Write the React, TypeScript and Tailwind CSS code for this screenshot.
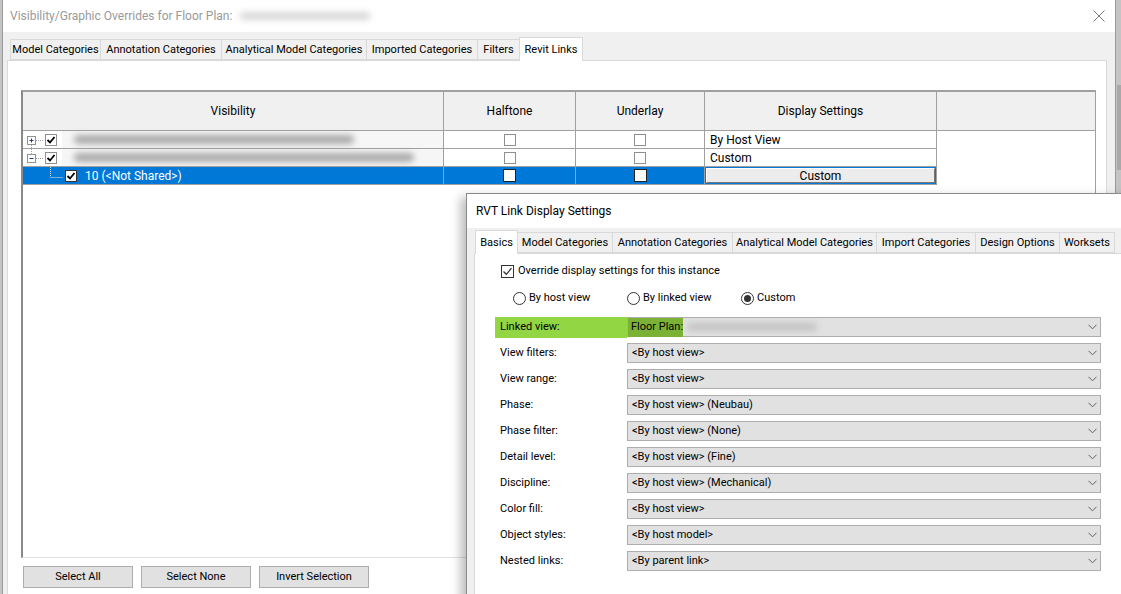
import React from "react";

const GRID = "border-[#a0a0a0]";

function Check({ checked, dark }: { checked?: boolean; dark?: boolean }) {
  return (
    <span
      className={`flex h-[12px] w-[12px] shrink-0 items-center justify-center border bg-white ${
        dark ? "border-[#333333]" : "border-[#8f8f8f]"
      }`}
    >
      {checked && (
        <svg width="10" height="10" viewBox="0 0 10 10">
          <path d="M1.5 5 L4 7.5 L8.5 2" fill="none" stroke="#000" strokeWidth="1.8" />
        </svg>
      )}
    </span>
  );
}

function Tab({ label, w, active, first }: { label: string; w: number; active?: boolean; first?: boolean }) {
  if (active) {
    return (
      <div
        className="relative z-10 -mb-px -ml-px flex h-[24px] items-center justify-center self-end whitespace-nowrap border border-b-0 border-[#d9d9d9] bg-white pt-px"
        style={{ width: w }}
      >
        {label}
      </div>
    );
  }
  return (
    <div
      className={`flex h-[21px] items-center justify-center self-end whitespace-nowrap border border-[#d9d9d9] bg-[#f0f0f0] pt-px ${
        first ? "" : "-ml-px"
      }`}
      style={{ width: w }}
    >
      {label}
    </div>
  );
}

function TreeBox({ minus }: { minus?: boolean }) {
  return (
    <svg width="22" height="17" viewBox="0 0 22 17" className="shrink-0">
      <rect x="4.5" y="5.5" width="8" height="8" fill="#fff" stroke="#919191" />
      <line x1="6.5" y1="9.5" x2="10.5" y2="9.5" stroke="#1c3e8c" />
      {!minus && <line x1="8.5" y1="7.5" x2="8.5" y2="11.5" stroke="#1c3e8c" />}
      <line x1="13" y1="9.5" x2="21" y2="9.5" stroke="#a0a0a0" strokeDasharray="1 1" />
      {minus ? (
        <line x1="8.5" y1="0" x2="8.5" y2="5" stroke="#a0a0a0" strokeDasharray="1 1" />
      ) : (
        <line x1="8.5" y1="14" x2="8.5" y2="17" stroke="#a0a0a0" strokeDasharray="1 1" />
      )}
    </svg>
  );
}

function Blur({ w }: { w: number }) {
  return (
    <div className="ml-[5px] flex h-full flex-1 items-center bg-[#f6f6f6] pl-[12px]">
      <div className="h-[9px] rounded-full bg-[#a9a9a9] blur-[3px]" style={{ width: w }} />
    </div>
  );
}

function GridRow({
  kind,
  display,
}: {
  kind: "plus" | "minus" | "child";
  display: string;
}) {
  const sel = kind === "child";
  return (
    <div className="flex h-[18px]">
      <div
        className={`flex w-[421px] items-center border-r border-b ${GRID} ${sel ? "bg-[#0078d7] text-white" : "bg-white"}`}
      >
        {kind === "child" ? (
          <>
            <svg width="42" height="17" viewBox="0 0 42 17" className="shrink-0">
              <line x1="27.5" y1="0" x2="27.5" y2="10" stroke="#e6e6e6" strokeDasharray="1 1" />
              <line x1="27.5" y1="10.5" x2="40" y2="10.5" stroke="#e6e6e6" strokeDasharray="1 1" />
            </svg>
            <Check checked dark />
            <span className="ml-[8px]">10 (&lt;Not Shared&gt;)</span>
          </>
        ) : (
          <>
            <TreeBox minus={kind === "minus"} />
            <Check checked />
            <Blur w={kind === "plus" ? 280 : 340} />
          </>
        )}
      </div>
      <div className={`flex w-[132px] items-center justify-center border-r border-b ${GRID} ${sel ? "bg-[#0078d7]" : "bg-white"}`}>
        {sel ? <span className="h-[13px] w-[13px] border border-[#222] bg-white" /> : <Check />}
      </div>
      <div className={`flex w-[129px] items-center justify-center border-r border-b ${GRID} ${sel ? "bg-[#0078d7]" : "bg-white"}`}>
        {sel ? <span className="h-[13px] w-[13px] border border-[#222] bg-white" /> : <Check />}
      </div>
      <div className={`flex w-[232px] items-center border-r border-b ${GRID} ${sel ? "bg-[#0078d7] p-px" : "bg-white pl-[5px]"}`}>
        {sel ? (
          <div className="flex h-full w-full items-center justify-center border border-t-white border-l-white border-r-[#777] border-b-[#777] bg-[#ececec]">
            {display}
          </div>
        ) : (
          display
        )}
      </div>
      <div className="flex-1 bg-white" />
    </div>
  );
}

function Chevron() {
  return (
    <svg width="9" height="6" viewBox="0 0 9 6" className="shrink-0">
      <path d="M0.5 0.8 L4.5 4.8 L8.5 0.8" fill="none" stroke="#606060" strokeWidth="1" />
    </svg>
  );
}

function SettingRow({ label, value, green }: { label: string; value: string; green?: boolean }) {
  return (
    <div className="flex h-[20px] items-center">
      <div
        className={`flex h-[21px] w-[127px] shrink-0 items-center whitespace-nowrap ${green ? "-ml-[5px] w-[132px] bg-[#93d644] pl-[5px]" : ""}`}
      >
        {label}
      </div>
      <div className="flex h-[20px] w-[474px] shrink-0 items-center border border-[#adadad] bg-[#e1e1e1] pr-[3px]">
        {green ? (
          <>
            <span className="flex h-[19px] w-[55px] shrink-0 items-center whitespace-nowrap bg-[#7bb236] pl-[3px]">
              Floor Plan:
            </span>
            <div className="ml-[4px] h-[8px] w-[130px] rounded-full bg-[#c2c2c2] blur-[3px]" />
          </>
        ) : (
          <span className="whitespace-nowrap pl-[4px]">{value}</span>
        )}
        <span className="flex-1" />
        <Chevron />
      </div>
    </div>
  );
}

function Radio({ label, on }: { label: string; on?: boolean }) {
  return (
    <div className="flex w-[114px] items-center gap-[3px]">
      <span className="flex h-[13px] w-[13px] items-center justify-center rounded-full border border-[#333] bg-white">
        {on && <span className="h-[7px] w-[7px] rounded-full bg-[#333]" />}
      </span>
      {label}
    </div>
  );
}

function Button({ label }: { label: string }) {
  return (
    <div className="flex h-[22px] w-[110px] items-center justify-center border border-[#adadad] bg-[#e1e1e1]">
      {label}
    </div>
  );
}

export default function App() {
  const rows: [string, string][] = [
    ["View filters:", "<By host view>"],
    ["View range:", "<By host view>"],
    ["Phase:", "<By host view> (Neubau)"],
    ["Phase filter:", "<By host view> (None)"],
    ["Detail level:", "<By host view> (Fine)"],
    ["Discipline:", "<By host view> (Mechanical)"],
    ["Color fill:", "<By host view>"],
    ["Object styles:", "<By host model>"],
    ["Nested links:", "<By parent link>"],
  ];

  return (
    <div className="relative h-[594px] w-[1121px] overflow-hidden bg-[#c4c4c4] font-['Roboto',sans-serif] text-[11px] text-black">
      {/* Main window */}
      <div className="absolute left-[2px] top-0 flex h-[640px] w-[1114px] flex-col border-x border-[#9a9a9a]">
        <div className="flex h-[32px] items-center bg-white pl-[7px] pr-[10px] text-[12px] text-[#9a9a9a]">
          <span>Visibility/Graphic Overrides for Floor Plan:</span>
          <div className="ml-[8px] h-[8px] w-[130px] rounded-full bg-[#d8d8d8] blur-[3px]" />
          <span className="flex-1" />
          <svg width="12" height="12" viewBox="0 0 12 12">
            <path d="M0.5 0.5 L11.5 11.5 M11.5 0.5 L0.5 11.5" stroke="#777" strokeWidth="1" />
          </svg>
        </div>
        <div className="flex flex-1 flex-col bg-[#f0f0f0] pl-[4px] pr-[8px]">
          <div className="flex h-[28px] pl-[3px]">
            <Tab label="Model Categories" w={91} first />
            <Tab label="Annotation Categories" w={122} />
            <Tab label="Analytical Model Categories" w={146} />
            <Tab label="Imported Categories" w={112} />
            <Tab label="Filters" w={43} />
            <Tab label="Revit Links" w={64} active />
          </div>
          <div className="flex flex-1 flex-col border border-[#d9d9d9] bg-white pl-[13px] pr-[10px] pt-[29px]">
            <div className="flex h-[468px] flex-col border-t-2 border-l-2 border-r border-b border-t-[#a0a0a0] border-l-[#8a8a8a] border-r-[#a0a0a0] border-b-[#e0e0e0] text-[12px]">
              <div className={`flex h-[39px] border-b ${GRID} bg-[#f0f0f0]`}>
                <div className={`flex w-[421px] items-center justify-center border-r ${GRID}`}>Visibility</div>
                <div className={`flex w-[132px] items-center justify-center border-r ${GRID}`}>Halftone</div>
                <div className={`flex w-[129px] items-center justify-center border-r ${GRID}`}>Underlay</div>
                <div className={`flex w-[232px] items-center justify-center border-r ${GRID}`}>Display Settings</div>
                <div className="flex-1" />
              </div>
              <GridRow kind="plus" display="By Host View" />
              <GridRow kind="minus" display="Custom" />
              <GridRow kind="child" display="Custom" />
              <div className="flex-1 bg-white" />
            </div>
            <div className="mt-[8px] flex gap-[8px] pl-[2px]">
              <Button label="Select All" />
              <Button label="Select None" />
              <Button label="Invert Selection" />
            </div>
          </div>
        </div>
      </div>

      {/* Right edge scrap */}
      <div className="absolute left-[1117px] top-[85px] h-[85px] w-[4px] bg-[#a8a8a8]" />

      {/* RVT Link Display Settings dialog */}
      <div className="absolute left-[466px] top-[193px] flex h-[430px] w-[680px] flex-col border border-[#8a8a8a] shadow-[-5px_4px_10px_rgba(0,0,0,0.28)]">
        <div className="flex h-[34px] items-center bg-white pl-[9px] text-[12px]">RVT Link Display Settings</div>
        <div className="flex flex-1 flex-col bg-[#f0f0f0] pl-[7px]">
          <div className="flex h-[25px] pl-[2px]">
            <Tab label="Basics" w={43} active />
            <Tab label="Model Categories" w={96} />
            <Tab label="Annotation Categories" w={121} />
            <Tab label="Analytical Model Categories" w={145} />
            <Tab label="Import Categories" w={100} />
            <Tab label="Design Options" w={85} />
            <Tab label="Worksets" w={56} />
          </div>
          <div className="flex flex-1 flex-col border border-[#d9d9d9] bg-white pl-[25px] pt-[11px]">
            <div className="ml-[1px] flex h-[13px] items-center gap-[4px]">
              <span className="flex h-[13px] w-[13px] items-center justify-center border border-[#333] bg-white">
                <svg width="11" height="11" viewBox="0 0 11 11">
                  <path d="M1.5 5.5 L4.3 8.3 L9.5 2.2" fill="none" stroke="#333" strokeWidth="1.3" />
                </svg>
              </span>
              Override display settings for this instance
            </div>
            <div className="mt-[14px] flex h-[13px] items-center pl-[13px]">
              <Radio label="By host view" />
              <Radio label="By linked view" />
              <Radio label="Custom" on />
            </div>
            <div className="mt-[12px] flex flex-col gap-[6px]">
              <SettingRow label="Linked view:" value="" green />
              {rows.map(([l, v]) => (
                <SettingRow key={l} label={l} value={v} />
              ))}
            </div>
          </div>
        </div>
      </div>
    </div>
  );
}
